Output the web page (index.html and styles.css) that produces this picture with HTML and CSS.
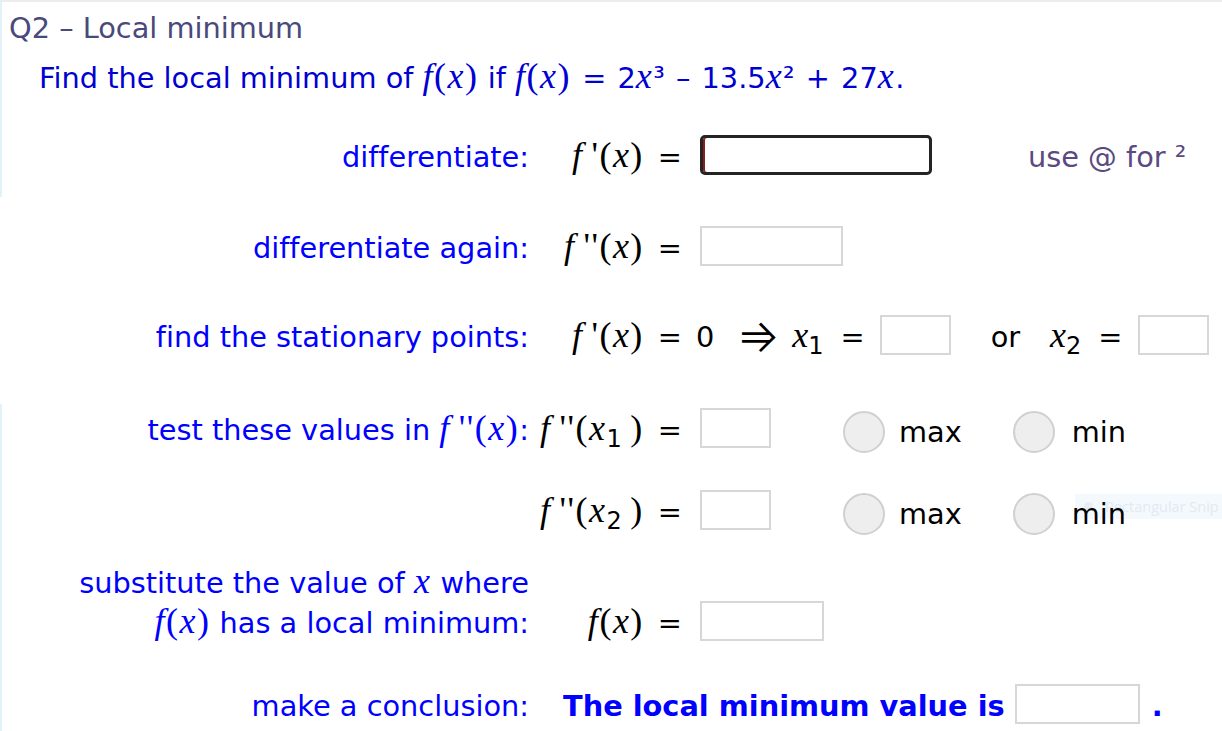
FILE: index.html
```html
<!DOCTYPE html>
<html lang="en">
<head>
<meta charset="utf-8">
<title>Q2 – Local minimum</title>
<link rel="stylesheet" href="styles.css">
</head>
<body>
<div class="sheet">
  <section class="sec sec-a">
    <h1 class="title">Q2 – Local minimum</h1>
    <p class="intro">Find the local minimum of <span class="m"><i>f</i>(<i>x</i>)</span> if <span class="m"><i>f</i>(<i>x</i>)</span><span class="poly"> = 2<span class="m"><i>x</i></span>³ – 13.5<span class="m"><i>x</i></span>² + 27<span class="m"><i>x</i></span>.</span></p>
    <div class="row">
      <div class="label">differentiate:</div>
      <div class="expr"><span class="m"><i class="fn">f</i>'(<i>x</i>)</span><span class="eq-r">=</span></div>
      <div class="answer">
        <input type="text" class="box box-focus box-w232">
        <span class="hint">use @ for ²</span>
      </div>
    </div>
  </section>

  <section class="sec sec-b">
    <div class="row">
      <div class="label">differentiate again:</div>
      <div class="expr"><span class="m"><i class="fn">f</i>''(<i>x</i>)</span><span class="eq-r">=</span></div>
      <div class="answer"><input type="text" class="box box-w143"></div>
    </div>
    <div class="row">
      <div class="label">find the stationary points:</div>
      <div class="expr"><span class="m"><i class="fn">f</i>'(<i>x</i>)</span><span class="eq-r">=</span></div>
      <div class="answer">
        <span class="zero">0</span>
        <span class="implies">⇒</span>
        <span class="var m"><i>x</i><span class="sub">1</span></span>
        <span class="eq">=</span>
        <input type="text" class="box box-w71 box-after-eq">
        <span class="or">or</span>
        <span class="var var-2 m"><i>x</i><span class="sub">2</span></span>
        <span class="eq">=</span>
        <input type="text" class="box box-w71 box-after-eq">
      </div>
    </div>
  </section>

  <section class="sec sec-c">
    <div class="row">
      <div class="label">test these values in <span class="m"><i class="fn">f</i>''(<i>x</i>)</span>:</div>
      <div class="expr"><span class="m"><i class="fn">f</i>''(<i>x</i><span class="sub">1</span>&thinsp;)</span><span class="eq-r">=</span></div>
      <div class="answer">
        <input type="text" class="box box-w71">
        <input type="radio" class="radio" name="t1">
        <span class="opt">max</span>
        <input type="radio" class="radio radio-2" name="t1">
        <span class="opt opt-min">min</span>
      </div>
    </div>
    <div class="row">
      <div class="label"></div>
      <div class="expr"><span class="m"><i class="fn">f</i>''(<i>x</i><span class="sub">2</span>&thinsp;)</span><span class="eq-r">=</span></div>
      <div class="answer">
        <input type="text" class="box box-w71">
        <input type="radio" class="radio" name="t2">
        <span class="opt">max</span>
        <input type="radio" class="radio radio-2" name="t2">
        <span class="opt opt-min">min</span>
      </div>
    </div>
    <div class="row row-tall">
      <div class="label">substitute the value of <span class="m"><i>x</i></span> where<br><span class="m"><i>f</i>(<i>x</i>)</span> has a local minimum:</div>
      <div class="expr"><span class="m"><i>f</i>(<i>x</i>)</span><span class="eq-r">=</span></div>
      <div class="answer"><input type="text" class="box box-w124"></div>
    </div>
    <div class="row">
      <div class="label">make a conclusion:</div>
      <div class="concl">
        <span class="concl-text">The local minimum value is</span>
        <input type="text" class="box box-w125">
        <span class="concl-dot">.</span>
      </div>
    </div>
  </section>

  <div class="snip"><span class="snip-dot"></span>Rectangular Snip</div>
</div>
</body>
</html>
```

FILE: styles.css
```css
* {
  box-sizing: border-box;
}

html, body {
  margin: 0;
  padding: 0;
  background: #ffffff;
}

body {
  font-family: "DejaVu Sans", Verdana, sans-serif;
  font-size: 28.8px;
  font-variant-ligatures: none;
  color: #000000;
  width: 1222px;
  height: 731px;
  overflow: hidden;
}

.sheet {
  position: relative;
  border-top: 2px solid #ececec;
  height: 731px;
}

.sec {
  position: relative;
  z-index: 1;
  border-left: 2px solid #e2f2fb;
  display: flex;
  flex-direction: column;
}

.sec > * {
  flex-shrink: 0;
}

.sec-a {
  padding: 9px 0 20px;
  height: 195px;
}

.sec-b {
  border-left-color: transparent;
  padding: 29px 0 0;
  height: 207px;
}

.sec-b .row + .row {
  margin-top: 49px;
}

.sec-c {
  padding: 4px 0 0;
  height: 327px;
}

.sec-c .row + .row {
  margin-top: 42px;
}

.sec-c .row + .row-tall {
  margin-top: 33px;
}

.sec-c .row-tall + .row {
  margin-top: 41px;
}

.title {
  margin: 0;
  padding-left: 7px;
  font-size: 28.8px;
  font-weight: normal;
  line-height: 34px;
  color: #49497a;
}

.intro {
  margin: 13px 0 0;
  padding-left: 37px;
  height: 40px;
  line-height: 40px;
  color: #0000d0;
  white-space: nowrap;
}

.poly {
  word-spacing: 2px;
}

.m {
  font-family: "Liberation Serif", "Times New Roman", serif;
  font-size: 1.25em;
  letter-spacing: 1.5px;
  line-height: 1;
}

.m i {
  font-style: italic;
}

.fn {
  margin-right: 8px;
}

.row {
  display: grid;
  grid-template-columns: 537px 161px 1fr;
  grid-template-rows: 40px;
  height: 40px;
  align-items: center;
  line-height: 40px;
  white-space: nowrap;
}

.sec-a .row {
  margin-top: 37px;
}

.row-tall {
  grid-template-rows: 80px;
  height: 80px;
  align-items: end;
}

.label {
  padding: 4px 10px 0 0;
  text-align: right;
  color: #0000ff;
}

.row-tall .label {
  padding-top: 0;
}

.expr {
  display: flex;
  justify-content: flex-end;
  align-items: baseline;
  padding: 4px 18px 0 0;
  color: #000000;
}

.row-tall .expr {
  padding-top: 0;
}

.eq-r {
  margin-left: 14px;
}

.answer {
  display: flex;
  align-items: center;
  height: 40px;
}

.row-tall .answer {
  padding-bottom: 2px;
  height: 42px;
}

.box {
  display: block;
  flex-shrink: 0;
  height: 40px;
  margin: 0;
  padding: 0 6px;
  border: 2px solid #d7d7d7;
  border-radius: 0;
  background: #ffffff;
  font: inherit;
  outline: none;
}

.box-focus {
  border: 3px solid #242424;
  border-radius: 5px;
  box-shadow: inset 2px 0 0 #8a1c1c;
}

.box-w232 { width: 232px; }
.box-w143 { width: 143px; }
.box-w124 { width: 124px; }
.box-w125 { width: 125px; }
.box-w71 { width: 71px; }

.hint {
  margin-left: 96px;
  padding-top: 4px;
  color: #5a4a82;
}

.zero {
  margin-left: -4px;
  padding-top: 4px;
}

.implies {
  margin-left: 22px;
  font-family: Inter, "DejaVu Sans", sans-serif;
  font-size: 46px;
  line-height: 40px;
  font-weight: 300;
}

.var {
  margin-left: 12px;
  letter-spacing: 0;
}

.var-2 {
  margin-left: 30px;
}

.sub {
  font-family: "DejaVu Sans", Verdana, sans-serif;
  font-size: 24px;
  font-style: normal;
  letter-spacing: 0;
  vertical-align: -7px;
  line-height: 0;
}

.eq {
  margin-left: 17px;
  padding-top: 4px;
}

.box-after-eq {
  margin-left: 15px;
}

.or {
  margin-left: 40px;
  padding-top: 4px;
}

.radio {
  appearance: none;
  -webkit-appearance: none;
  display: block;
  flex-shrink: 0;
  width: 42px;
  height: 42px;
  margin: 7px 0 0 72px;
  border: 2px solid #d0d0d0;
  border-radius: 50%;
  background: #eeeeee;
}

.radio-2 {
  margin-left: 51px;
}

.opt {
  margin-left: 14px;
  padding-top: 8px;
}

.opt-min {
  margin-left: 17px;
}

.concl {
  grid-column: 2 / 4;
  display: flex;
  align-items: center;
  height: 40px;
  padding-left: 24px;
}

.concl-text {
  font-weight: bold;
  color: #0000ff;
  padding-top: 4px;
}

.concl .box {
  margin-left: 10px;
}

.concl-dot {
  margin-left: 12px;
  padding-top: 4px;
  font-weight: bold;
  color: #0000ff;
}

.snip {
  position: absolute;
  z-index: 0;
  left: 1075px;
  top: 492px;
  width: 147px;
  height: 25px;
  padding-left: 30px;
  background: #f4f9fe;
  color: #e3e9f0;
  font-family: "Open Sans", "DejaVu Sans", sans-serif;
  font-size: 14.5px;
  line-height: 25px;
  white-space: nowrap;
  overflow: hidden;
}

.snip-dot {
  position: absolute;
  left: 9px;
  top: 8px;
  width: 9px;
  height: 9px;
  border-radius: 50%;
  background: #e8eef4;
}
```
